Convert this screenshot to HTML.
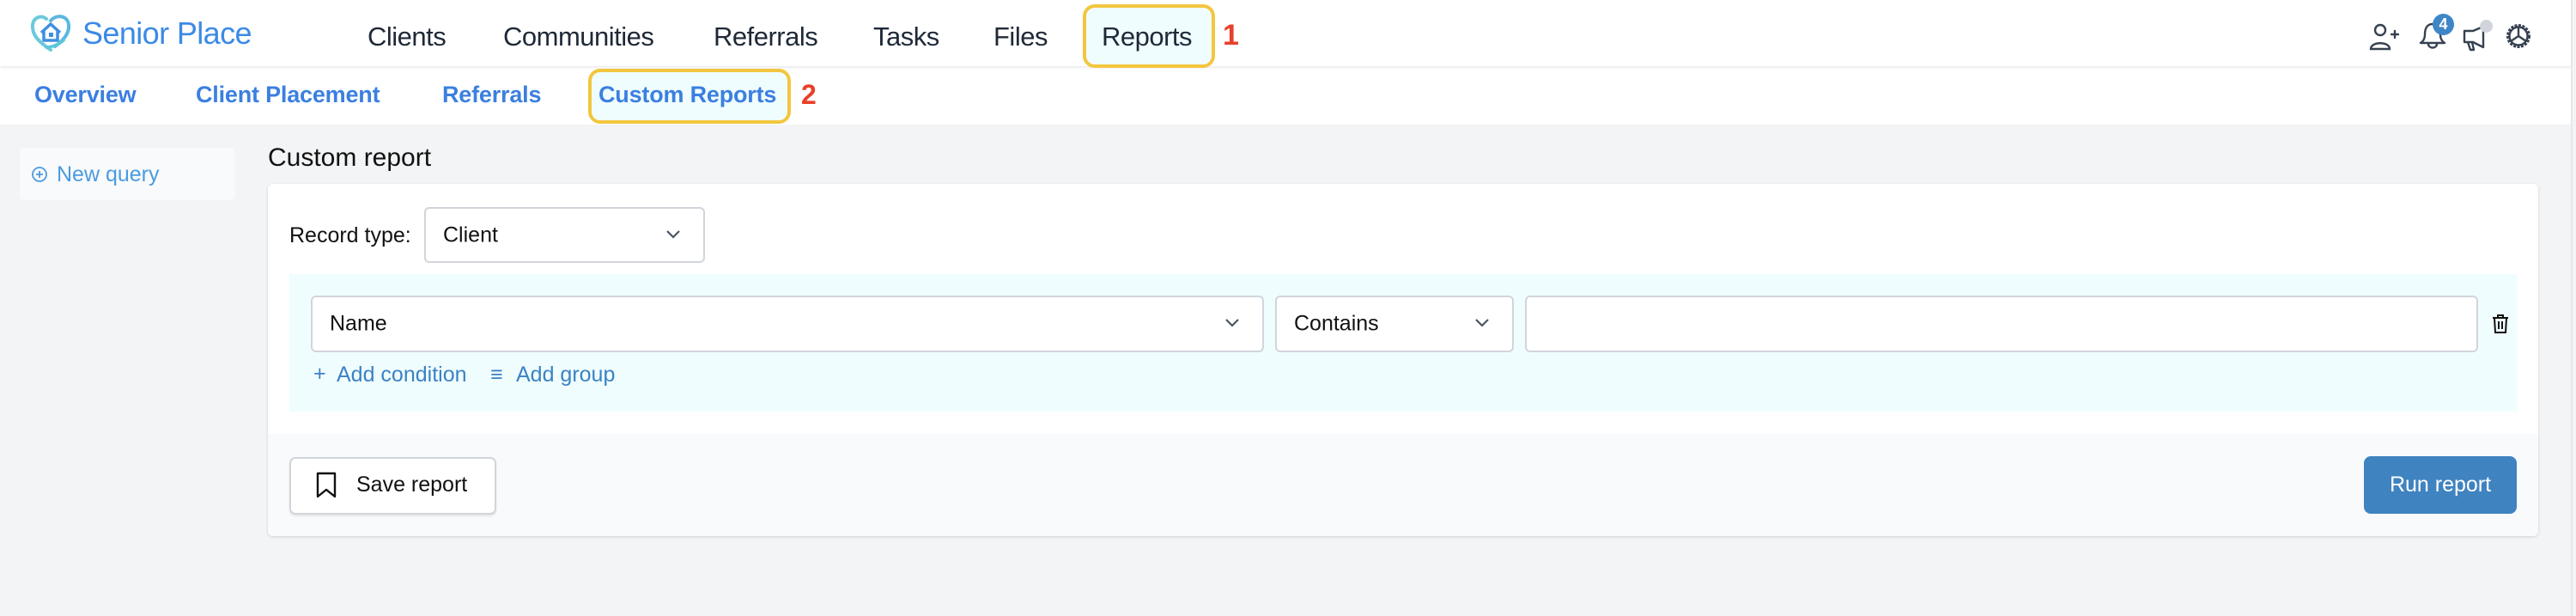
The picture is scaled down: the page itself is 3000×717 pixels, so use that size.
<!DOCTYPE html>
<html><head><meta charset="utf-8"><style>
*{box-sizing:border-box;margin:0;padding:0}
body{width:3000px;height:717px;background:#f3f4f6;font-family:"Liberation Sans",sans-serif;position:relative;overflow:hidden}
.a{position:absolute;white-space:nowrap}
.nav{font-size:31px;color:#1f2937;top:25px;letter-spacing:-0.5px}
.sub{font-size:27px;color:#3b7fe0;font-weight:bold;top:95px;letter-spacing:-0.2px}
.sel{position:absolute;background:#fff;border:2px solid #d1d5db;border-radius:6px}
.sel span{position:absolute;left:20px;top:50%;transform:translateY(-50%);font-size:25px;color:#111}
.chev{position:absolute;right:26px;top:50%;margin-top:-7px}
</style></head><body>
<div class="a" style="left:0;top:0;width:2994px;height:77px;background:#fff;box-shadow:0 2px 3px rgba(0,0,0,.08);z-index:2"></div>
<div class="a" style="left:0;top:77px;width:2994px;height:68px;background:#fff"></div>
<div class="a" style="left:2994px;top:0;width:2px;height:717px;background:#e5e7eb;z-index:3"></div>
<div class="a" style="left:2996px;top:0;width:4px;height:717px;background:#f3f4f6;z-index:3"></div>
<div style="position:absolute;left:0;top:0;z-index:4">
<svg class="a" style="left:34px;top:14px" width="50" height="50" viewBox="0 0 50 50">
<path d="M25 44 C10 34 3 26 4 15 C5 6 14 3 20 8" fill="none" stroke="#6cc9dc" stroke-width="4" stroke-linecap="round"/>
<path d="M25 10 C32 2 45 4 46 15 C47 25 40 33 30 40" fill="none" stroke="#5cb8e0" stroke-width="4" stroke-linecap="round"/>
<path d="M14 24 L25 14 L36 24 M17 22 V33 H33 V22" fill="none" stroke="#3f8fe0" stroke-width="3.5" stroke-linejoin="round"/>
<rect x="23" y="24" width="5" height="5" fill="#3f8fe0"/>
<path d="M20 41 C26 41 34 38 40 33" fill="none" stroke="#5cc7d8" stroke-width="3.5" stroke-linecap="round"/>
</svg>
<div class="a" style="left:96px;top:18px;font-size:36px;color:#3b8ae6;letter-spacing:-0.6px">Senior Place</div>
<div class="a nav" style="left:428px">Clients</div>
<div class="a nav" style="left:586px">Communities</div>
<div class="a nav" style="left:831px">Referrals</div>
<div class="a nav" style="left:1017px">Tasks</div>
<div class="a nav" style="left:1157px">Files</div>
<div class="a" style="left:1261px;top:5px;width:154px;height:74px;border:4px solid #f3c63f;border-radius:14px;background:#f0fdff"></div>
<div class="a nav" style="left:1283px">Reports</div>
<div class="a" style="left:1424px;top:22px;font-size:34px;font-weight:bold;color:#e8402a">1</div>
<svg class="a" style="left:2758px;top:26px" width="36" height="34" viewBox="0 0 36 34" fill="none" stroke="#374151" stroke-width="2.4" stroke-linecap="round"><circle cx="14" cy="9" r="6"/><path d="M3 31 C3 22 25 22 25 31 Z"/><path d="M27 14 H35 M31 10 V18"/></svg>
<svg class="a" style="left:2816px;top:24px" width="34" height="36" viewBox="0 0 34 36" fill="none" stroke="#374151" stroke-width="2.4" stroke-linejoin="round"><path d="M17 4 C10 4 8 10 8 16 C8 22 5 25 3 26 H31 C29 25 26 22 26 16 C26 10 24 4 17 4Z"/><path d="M12 27 C12 33 22 33 22 27"/></svg>
<div class="a" style="left:2833px;top:16px;width:25px;height:25px;border-radius:50%;background:#3f86c6;color:#fff;font-size:18px;font-weight:bold;text-align:center;line-height:25px">4</div>
<svg class="a" style="left:2866px;top:28px" width="34" height="32" viewBox="0 0 34 32" fill="none" stroke="#374151" stroke-width="2.4" stroke-linejoin="round"><path d="M4 8 H14 L26 3 V27 L14 21 H4 Z"/><path d="M8 21 L11 30 H15 L13 21"/></svg>
<div class="a" style="left:2888px;top:23px;width:15px;height:15px;border-radius:50%;background:#d1d5db"></div>
<svg class="a" style="left:2917px;top:26px" width="32" height="32" viewBox="0 0 32 32" fill="none" stroke="#374151" stroke-width="2.4"><circle cx="16" cy="16" r="12.5" stroke-dasharray="3 1.5" stroke-width="3"/><circle cx="16" cy="16" r="10.5"/><path d="M16 5 V16 L7 22 M16 16 L25 22"/></svg>
</div>
<div class="a sub" style="left:40px">Overview</div>
<div class="a sub" style="left:228px">Client Placement</div>
<div class="a sub" style="left:515px">Referrals</div>
<div class="a" style="left:685px;top:80px;width:236px;height:64px;border:4px solid #f3c63f;border-radius:14px;background:#f0fdff"></div>
<div class="a sub" style="left:697px">Custom Reports</div>
<div class="a" style="left:933px;top:92px;font-size:32px;font-weight:bold;color:#e8402a">2</div>
<div class="a" style="left:23px;top:172px;width:251px;height:61px;background:#f9fafb;border-radius:6px"></div>
<svg class="a" style="left:36px;top:193px" width="20" height="20" viewBox="0 0 20 20" fill="none" stroke="#4a9be0" stroke-width="1.8"><circle cx="10" cy="10" r="8"/><path d="M10 6 V14 M6 10 H14"/></svg>
<div class="a" style="left:66px;top:189px;font-size:25px;color:#4a9be0">New query</div>
<div class="a" style="left:312px;top:167px;font-size:30px;color:#111">Custom report</div>
<div class="a" style="left:312px;top:214px;width:2644px;height:410px;background:#fff;border-radius:6px;box-shadow:0 1px 3px rgba(0,0,0,.15);overflow:hidden">
<div class="a" style="left:0;top:291px;width:100%;height:119px;background:#f9fafb"></div>
</div>
<div class="a" style="left:337px;top:260px;font-size:25px;color:#111">Record type:</div>
<div class="sel" style="left:494px;top:241px;width:327px;height:65px"><span>Client</span>
<svg class="chev" width="18" height="12" viewBox="0 0 18 12" fill="none" stroke="#4b5563" stroke-width="2.2"><path d="M2 2 L9 9 L16 2"/></svg></div>
<div class="a" style="left:337px;top:319px;width:2594px;height:160px;background:#f0fdfe"></div>
<div class="sel" style="left:362px;top:344px;width:1110px;height:66px"><span>Name</span>
<svg class="chev" width="18" height="12" viewBox="0 0 18 12" fill="none" stroke="#4b5563" stroke-width="2.2"><path d="M2 2 L9 9 L16 2"/></svg></div>
<div class="sel" style="left:1485px;top:344px;width:278px;height:66px"><span>Contains</span>
<svg class="chev" width="18" height="12" viewBox="0 0 18 12" fill="none" stroke="#4b5563" stroke-width="2.2"><path d="M2 2 L9 9 L16 2"/></svg></div>
<div class="sel" style="left:1776px;top:344px;width:1110px;height:66px"></div>
<svg class="a" style="left:2901px;top:365px" width="22" height="24" viewBox="0 0 22 24" fill="none" stroke="#111" stroke-width="2"><path d="M2 5 H20 M8 5 V2 H14 V5 M4 5 L5 22 H17 L18 5 M9 9 V18 M13 9 V18"/></svg>
<div class="a" style="left:365px;top:421px;font-size:25px;color:#3b82c4">+</div>
<div class="a" style="left:392px;top:422px;font-size:25px;color:#3b82c4">Add condition</div>
<div class="a" style="left:571px;top:422px;font-size:25px;color:#3b82c4">≡</div>
<div class="a" style="left:601px;top:422px;font-size:25px;color:#3b82c4">Add group</div>
<div class="a" style="left:337px;top:532px;width:241px;height:67px;background:#fff;border:2px solid #d1d5db;border-radius:7px;box-shadow:0 2px 2px rgba(0,0,0,.08)"></div>
<svg class="a" style="left:367px;top:549px" width="26" height="32" viewBox="0 0 26 32" fill="none" stroke="#111" stroke-width="2.4" stroke-linejoin="round"><path d="M3 2 H23 V29 L13 21 L3 29 Z"/></svg>
<div class="a" style="left:415px;top:550px;font-size:25px;color:#111">Save report</div>
<div class="a" style="left:2753px;top:531px;width:178px;height:67px;background:#3f83c0;border-radius:8px;color:#fff;font-size:25px;text-align:center;line-height:67px">Run report</div>
</body></html>
